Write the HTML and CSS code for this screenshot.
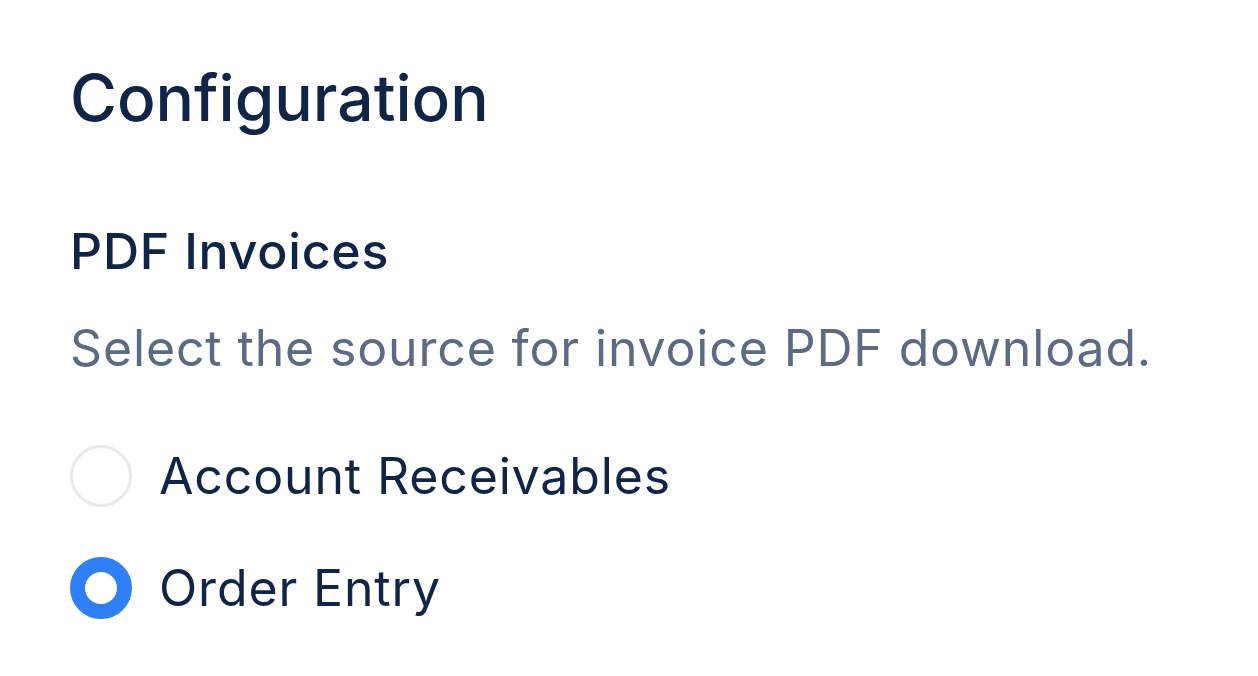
FILE: index.html
```html
<!DOCTYPE html>
<html lang="en">
<head>
<meta charset="utf-8">
<title>Configuration</title>
<link rel="stylesheet" href="styles.css">
</head>
<body>
<main class="panel">
  <h1 class="title">Configuration</h1>
  <section class="group">
    <h2 class="group-title">PDF Invoices</h2>
    <p class="group-desc">Select the source for invoice PDF download.</p>
    <div class="options">
      <label class="option">
        <span class="radio"></span>
        <span class="option-label">Account Receivables</span>
      </label>
      <label class="option">
        <span class="radio radio-checked"></span>
        <span class="option-label">Order Entry</span>
      </label>
    </div>
  </section>
</main>
</body>
</html>
```
FILE: styles.css
```css
html, body {
  margin: 0;
  padding: 0;
  background: #ffffff;
}
body {
  font-family: Inter, "Noto Sans", sans-serif;
  color: #0f2447;
}
.panel {
  padding: 66px 70px 0 70px;
}
.title {
  margin: 0;
  font-size: 64px;
  font-weight: 500;
  line-height: 64px;
  color: #0f2447;
}
.group {
  margin-top: 91px;
}
.group-title {
  margin: 0;
  font-size: 50px;
  font-weight: 500;
  line-height: 60px;
  letter-spacing: 0.8px;
  color: #0f2447;
}
.group-desc {
  margin: 37px 0 0 0;
  font-size: 50px;
  font-weight: 400;
  line-height: 60px;
  letter-spacing: 0.85px;
  color: #5d6a83;
}
.options {
  margin-top: 67px;
  display: flex;
  flex-direction: column;
  gap: 50px;
}
.option {
  display: flex;
  align-items: center;
  gap: 27px;
}
.radio {
  box-sizing: border-box;
  width: 62px;
  height: 62px;
  border-radius: 50%;
  border: 3px solid #e8e9ec;
  background: #ffffff;
  flex: none;
}
.radio-checked {
  border: 15px solid #2f80f7;
}
.option-label {
  font-size: 50px;
  line-height: 62px;
  font-weight: 400;
  letter-spacing: 0.85px;
  color: #0f2447;
}
```
